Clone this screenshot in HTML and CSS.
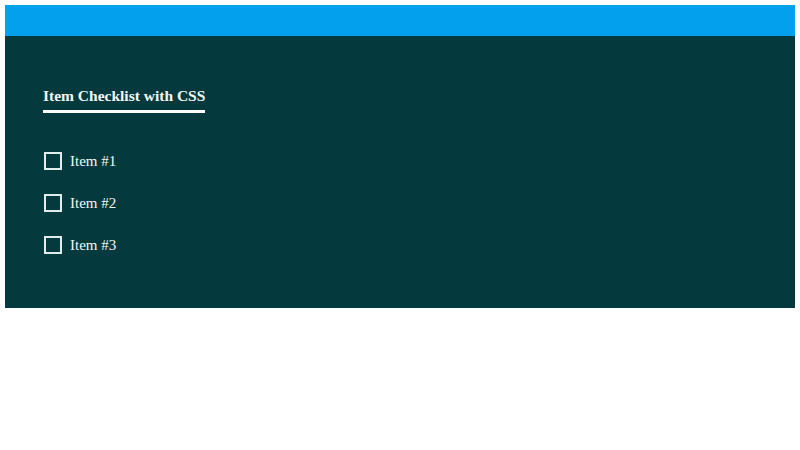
FILE: index.html
```html
<!DOCTYPE html>
<html lang="en">
<head>
<meta charset="utf-8">
<title>Item Checklist with CSS</title>
<link rel="stylesheet" href="styles.css">
</head>
<body>
  <div class="app">
    <header class="topbar"></header>
    <main class="panel">
      <h2 class="title">Item Checklist with CSS</h2>
      <ul class="checklist">
        <li class="item"><label><input type="checkbox"><span class="box"></span><span class="label">Item #1</span></label></li>
        <li class="item"><label><input type="checkbox"><span class="box"></span><span class="label">Item #2</span></label></li>
        <li class="item"><label><input type="checkbox"><span class="box"></span><span class="label">Item #3</span></label></li>
      </ul>
    </main>
  </div>
</body>
</html>
```
FILE: styles.css
```css
html, body {
  margin: 0;
  padding: 0;
  background: #ffffff;
}

body {
  padding: 5px;
  font-family: "Liberation Serif", "Times New Roman", serif;
}

.app {
  width: 790px;
}

.topbar {
  height: 31px;
  background: #03a0ee;
}

.panel {
  box-sizing: border-box;
  height: 272px;
  background: #043a3e;
  color: #f2f7f6;
  padding: 50px 38px 0;
}

.title {
  display: inline-block;
  margin: 0;
  font-size: 15.5px;
  font-weight: bold;
  line-height: 20px;
  padding-bottom: 4px;
  border-bottom: 3px solid #ffffff;
}

.checklist {
  list-style: none;
  margin: 38px 0 0;
  padding: 0;
  display: flex;
  flex-direction: column;
  gap: 22px;
}

.item label {
  display: flex;
  align-items: center;
  gap: 8px;
  height: 20px;
  cursor: pointer;
}

.item input {
  display: none;
}

.box {
  width: 14px;
  height: 14px;
  margin-left: 1px;
  border: 2px solid #dfeeed;
}

.item input:checked + .box {
  background: #dfeeed;
}

.label {
  font-size: 15px;
  line-height: 20px;
}
```
